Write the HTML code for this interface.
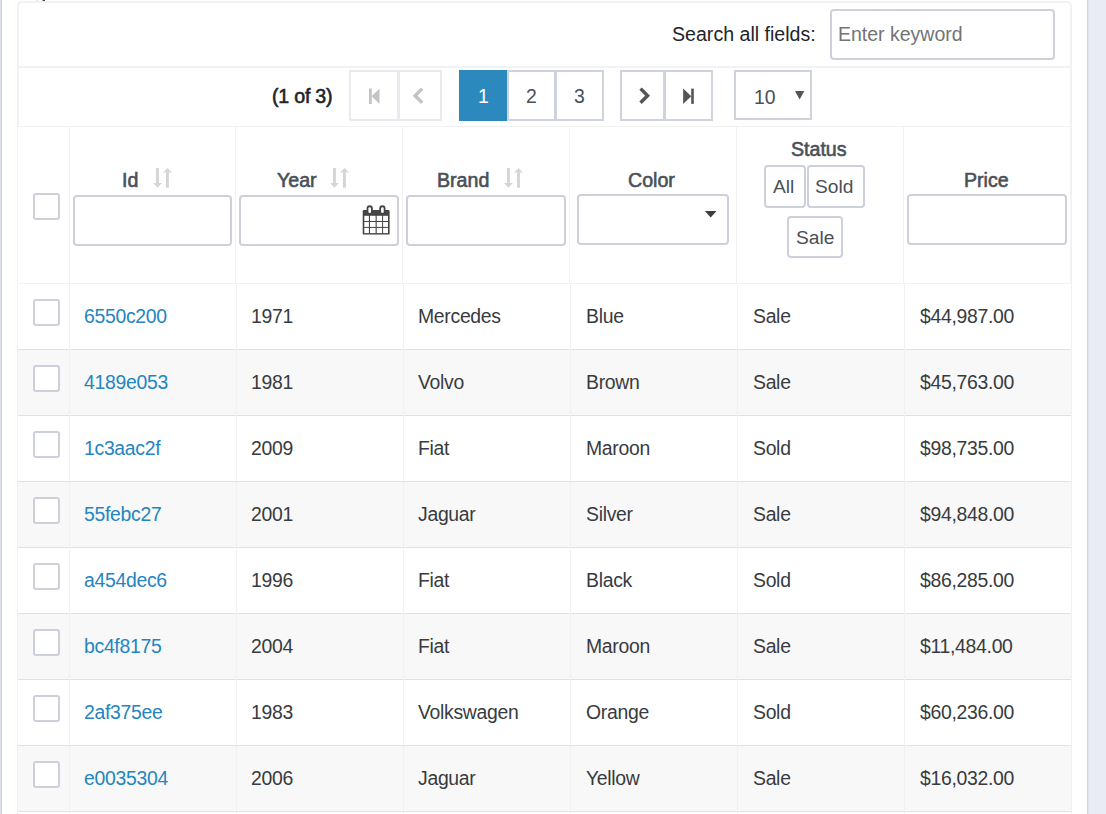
<!DOCTYPE html>
<html><head><meta charset="utf-8">
<style>
html,body{margin:0;padding:0;}
body{width:1106px;height:814px;overflow:hidden;background:#fff;position:relative;font-family:"Liberation Sans",sans-serif;color:#212529;}
.a{position:absolute;box-sizing:border-box;}
.t{position:absolute;white-space:nowrap;line-height:1;}
.hl{position:absolute;height:1px;}
.vl{position:absolute;width:1px;}
.inp{position:absolute;box-sizing:border-box;border:2px solid #cdd0da;border-radius:4px;background:#fff;}
.pbtn{position:absolute;box-sizing:border-box;border:2px solid #cfd3dd;background:#fff;}
.cb{position:absolute;box-sizing:border-box;width:27px;height:27px;border:2px solid #cdd0da;border-radius:3px;background:#fff;}
.cell{font-size:19.4px;letter-spacing:-0.3px;color:#383b3f;}
.lnk{color:#2485c0;}
.hdr{font-size:19.6px;font-weight:normal;color:#495057;-webkit-text-stroke:0.6px #495057;}
</style></head><body>
<!-- left strip -->
<div class="a" style="left:0;top:0;width:1px;height:814px;background:#dee2eb"></div>
<div class="a" style="left:1px;top:0;width:1px;height:814px;background:#ced2d8"></div>
<!-- right strip -->
<div class="a" style="left:1087px;top:0;width:1px;height:814px;background:#d0d3d7"></div>
<div class="a" style="left:1088px;top:0;width:1px;height:814px;background:#e0e4ec"></div><div class="a" style="left:1089px;top:0;width:17px;height:814px;background:#e9ecf5"></div>
<!-- dot at top -->
<div class="a" style="left:42px;top:0;width:1px;height:1px;background:#aaa"></div><div class="a" style="left:43px;top:0;width:2px;height:1px;background:#444"></div><div class="a" style="left:36px;top:0;width:2px;height:1px;background:#e6e6e6"></div>

<!-- panel -->
<div class="a" id="panel" style="left:17px;top:1px;width:1055px;height:126px;border:2px solid #f2f2f2;border-bottom:0;border-radius:5px 5px 0 0;"></div>
<div class="vl" style="left:17px;top:127px;height:157px;background:#f2f2f2"></div>
<div class="a" style="left:1070px;top:127px;width:2px;height:157px;background:#f2f2f2"></div>

<!-- search header -->
<div class="t" style="left:672px;top:25px;font-size:19.6px;color:#212529">Search all fields:</div>
<div class="inp" style="left:830px;top:9px;width:225px;height:51px;"></div>
<div class="t" style="left:838px;top:25px;font-size:19.5px;color:#717477">Enter keyword</div>
<div class="a" style="left:19px;top:66px;width:1051px;height:2px;background:#f2f2f2"></div>

<!-- paginator -->
<div class="t" style="left:272px;top:87px;font-size:19.6px;letter-spacing:-0.22px;color:#212529;-webkit-text-stroke:0.6px #212529">(1 of 3)</div>
<div class="pbtn" style="left:349px;top:70px;width:50px;height:51px;border-color:#e8eaef"></div>
<div class="pbtn" style="left:398px;top:70px;width:44px;height:51px;border-color:#e8eaef"></div>
<svg class="a" style="left:360px;top:80px" width="30" height="30" viewBox="360 80 30 30"><rect x="369" y="88.5" width="2.8" height="15.5" fill="#c4c4c4"/><polygon points="371.6,96.3 379.5,88.5 379.5,104" fill="#c4c4c4"/></svg>
<svg class="a" style="left:405px;top:80px" width="30" height="30" viewBox="405 80 30 30"><polyline points="421,89.8 415.1,95.7 421,101.6" fill="none" stroke="#c4c4c4" stroke-width="3.4" stroke-linecap="square" stroke-linejoin="miter"/></svg>
<div class="a" style="left:459px;top:70px;width:48px;height:51px;background:#2b89bd"></div>
<div class="t" style="left:478px;top:87px;font-size:19.4px;color:#fff">1</div>
<div class="pbtn" style="left:507px;top:70px;width:49px;height:51px;"></div>
<div class="t" style="left:526px;top:87px;font-size:19.4px;color:#495057">2</div>
<div class="pbtn" style="left:555px;top:70px;width:49px;height:51px;"></div>
<div class="t" style="left:574px;top:87px;font-size:19.4px;color:#495057">3</div>
<div class="pbtn" style="left:620px;top:70px;width:45px;height:51px;"></div>
<div class="pbtn" style="left:664px;top:70px;width:49px;height:51px;"></div>
<svg class="a" style="left:628px;top:80px" width="30" height="30" viewBox="628 80 30 30"><polyline points="641.7,89.8 647.6,95.7 641.7,101.6" fill="none" stroke="#555" stroke-width="3.4" stroke-linecap="square" stroke-linejoin="miter"/></svg>
<svg class="a" style="left:673px;top:80px" width="30" height="30" viewBox="673 80 30 30"><polygon points="683.1,88.5 691.3,96.2 683.1,104" fill="#555"/><rect x="691.2" y="88.6" width="2.6" height="15.3" fill="#555"/></svg>
<div class="pbtn" style="left:734px;top:70px;width:78px;height:50px;"></div>
<div class="t" style="left:754px;top:88px;font-size:19.4px;color:#495057">10</div>
<svg class="a" style="left:790px;top:85px" width="20" height="20" viewBox="790 85 20 20"><polygon points="795,91 804.3,91 799.65,99.5" fill="#555"/></svg>
<div class="hl" style="left:17px;top:126px;width:1055px;background:#f2f2f2"></div>

<!-- column borders (header) -->
<div class="vl" style="left:69px;top:127px;height:156px;background:#f1f1f1"></div>
<div class="vl" style="left:235px;top:127px;height:156px;background:#f1f1f1"></div>
<div class="vl" style="left:402px;top:127px;height:156px;background:#f1f1f1"></div>
<div class="vl" style="left:569px;top:127px;height:156px;background:#f1f1f1"></div>
<div class="vl" style="left:736px;top:127px;height:156px;background:#f1f1f1"></div>
<div class="vl" style="left:903px;top:127px;height:156px;background:#f1f1f1"></div>

<!-- header row -->
<div class="cb" style="left:33px;top:193px"></div>
<div class="t hdr" style="left:122px;top:171px">Id</div>
<svg class="a sort" style="left:150px;top:164px" width="26" height="28" viewBox="150 164 26 28"><rect x="156" y="168.1" width="2.9" height="15.2" fill="#d5d5d5"/><polygon points="153.1,183.1 161.9,183.1 157.45,187.8" fill="#d5d5d5"/><polygon points="163.1,172.6 171.8,172.6 167.45,168.1" fill="#d5d5d5"/><rect x="166" y="172.4" width="2.9" height="15.3" fill="#d5d5d5"/></svg>
<div class="inp" style="left:73px;top:195px;width:159px;height:51px"></div>
<div class="t hdr" style="left:277px;top:171px">Year</div>
<svg class="a sort" style="left:327px;top:164px" width="26" height="28" viewBox="150 164 26 28"><rect x="156" y="168.1" width="2.9" height="15.2" fill="#d5d5d5"/><polygon points="153.1,183.1 161.9,183.1 157.45,187.8" fill="#d5d5d5"/><polygon points="163.1,172.6 171.8,172.6 167.45,168.1" fill="#d5d5d5"/><rect x="166" y="172.4" width="2.9" height="15.3" fill="#d5d5d5"/></svg>
<div class="inp" style="left:239px;top:195px;width:160px;height:51px"></div>
<svg class="a" style="left:360px;top:203px" width="32" height="34" viewBox="360 203 32 34">
<rect x="362.7" y="209.9" width="26.9" height="24.7" rx="1.2" fill="#444"/>
<g fill="#fff">
<rect x="364.3" y="215.8" width="4.6" height="5.2"/><rect x="370" y="215.8" width="5.6" height="5.2"/><rect x="376.7" y="215.8" width="5.4" height="5.2"/><rect x="383.1" y="215.8" width="4.9" height="5.2"/>
<rect x="364.3" y="222" width="4.6" height="4.9"/><rect x="370" y="222" width="5.6" height="4.9"/><rect x="376.7" y="222" width="5.4" height="4.9"/><rect x="383.1" y="222" width="4.9" height="4.9"/>
<rect x="364.3" y="227.9" width="4.6" height="5.2"/><rect x="370" y="227.9" width="5.6" height="5.2"/><rect x="376.7" y="227.9" width="5.4" height="5.2"/><rect x="383.1" y="227.9" width="4.9" height="5.2"/>
</g>
<rect x="366.6" y="205.2" width="6.2" height="8.6" rx="3" fill="#444"/><rect x="379.3" y="205.2" width="6.2" height="8.6" rx="3" fill="#444"/>
<rect x="368.4" y="207.3" width="2.6" height="5.7" rx="1.3" fill="#fff"/><rect x="381.1" y="207.3" width="2.6" height="5.7" rx="1.3" fill="#fff"/>
</svg>
<div class="t hdr" style="left:437px;top:171px">Brand</div>
<svg class="a sort" style="left:501px;top:164px" width="26" height="28" viewBox="150 164 26 28"><rect x="156" y="168.1" width="2.9" height="15.2" fill="#d5d5d5"/><polygon points="153.1,183.1 161.9,183.1 157.45,187.8" fill="#d5d5d5"/><polygon points="163.1,172.6 171.8,172.6 167.45,168.1" fill="#d5d5d5"/><rect x="166" y="172.4" width="2.9" height="15.3" fill="#d5d5d5"/></svg>
<div class="inp" style="left:406px;top:195px;width:160px;height:51px"></div>
<div class="t hdr" style="left:628px;top:171px">Color</div>
<div class="inp" style="left:577px;top:194px;width:152px;height:51px"></div>
<svg class="a" style="left:696px;top:204px" width="28" height="20" viewBox="696 204 28 20"><polygon points="704.9,211.1 716.5,211.1 710.7,217.4" fill="#3d3d3d"/></svg>
<div class="t hdr" style="left:791px;top:140px">Status</div>
<div class="inp" style="left:764px;top:165px;width:42px;height:43px"></div>
<div class="t" style="left:773px;top:177px;font-size:19.2px;color:#495057">All</div>
<div class="inp" style="left:807px;top:165px;width:58px;height:43px"></div>
<div class="t" style="left:815px;top:177px;font-size:19.2px;color:#495057">Sold</div>
<div class="inp" style="left:787px;top:216px;width:56px;height:42px"></div>
<div class="t" style="left:796px;top:228px;font-size:19.2px;color:#495057">Sale</div>
<div class="t hdr" style="left:964px;top:171px">Price</div>
<div class="inp" style="left:907px;top:194px;width:160px;height:51px"></div>
<div class="hl" style="left:18px;top:283px;width:1052px;background:#f2f2f2"></div>

<!--ROWS-->
<div class="cb" style="left:33px;top:299px"></div>
<div class="t cell lnk" style="left:84px;top:307px">6550c200</div>
<div class="t cell" style="left:251px;top:307px">1971</div>
<div class="t cell" style="left:418px;top:307px">Mercedes</div>
<div class="t cell" style="left:586px;top:307px">Blue</div>
<div class="t cell" style="left:753px;top:307px">Sale</div>
<div class="t cell" style="left:920px;top:307px">$44,987.00</div>
<div class="a" style="left:18px;top:350px;width:1053px;height:65px;background:#f8f8f8"></div>
<div class="hl" style="left:18px;top:349px;width:1053px;background:#dee2e6"></div>
<div class="cb" style="left:33px;top:365px"></div>
<div class="t cell lnk" style="left:84px;top:373px">4189e053</div>
<div class="t cell" style="left:251px;top:373px">1981</div>
<div class="t cell" style="left:418px;top:373px">Volvo</div>
<div class="t cell" style="left:586px;top:373px">Brown</div>
<div class="t cell" style="left:753px;top:373px">Sale</div>
<div class="t cell" style="left:920px;top:373px">$45,763.00</div>
<div class="hl" style="left:18px;top:415px;width:1053px;background:#dee2e6"></div>
<div class="cb" style="left:33px;top:431px"></div>
<div class="t cell lnk" style="left:84px;top:439px">1c3aac2f</div>
<div class="t cell" style="left:251px;top:439px">2009</div>
<div class="t cell" style="left:418px;top:439px">Fiat</div>
<div class="t cell" style="left:586px;top:439px">Maroon</div>
<div class="t cell" style="left:753px;top:439px">Sold</div>
<div class="t cell" style="left:920px;top:439px">$98,735.00</div>
<div class="a" style="left:18px;top:482px;width:1053px;height:65px;background:#f8f8f8"></div>
<div class="hl" style="left:18px;top:481px;width:1053px;background:#dee2e6"></div>
<div class="cb" style="left:33px;top:497px"></div>
<div class="t cell lnk" style="left:84px;top:505px">55febc27</div>
<div class="t cell" style="left:251px;top:505px">2001</div>
<div class="t cell" style="left:418px;top:505px">Jaguar</div>
<div class="t cell" style="left:586px;top:505px">Silver</div>
<div class="t cell" style="left:753px;top:505px">Sale</div>
<div class="t cell" style="left:920px;top:505px">$94,848.00</div>
<div class="hl" style="left:18px;top:547px;width:1053px;background:#dee2e6"></div>
<div class="cb" style="left:33px;top:563px"></div>
<div class="t cell lnk" style="left:84px;top:571px">a454dec6</div>
<div class="t cell" style="left:251px;top:571px">1996</div>
<div class="t cell" style="left:418px;top:571px">Fiat</div>
<div class="t cell" style="left:586px;top:571px">Black</div>
<div class="t cell" style="left:753px;top:571px">Sold</div>
<div class="t cell" style="left:920px;top:571px">$86,285.00</div>
<div class="a" style="left:18px;top:614px;width:1053px;height:65px;background:#f8f8f8"></div>
<div class="hl" style="left:18px;top:613px;width:1053px;background:#dee2e6"></div>
<div class="cb" style="left:33px;top:629px"></div>
<div class="t cell lnk" style="left:84px;top:637px">bc4f8175</div>
<div class="t cell" style="left:251px;top:637px">2004</div>
<div class="t cell" style="left:418px;top:637px">Fiat</div>
<div class="t cell" style="left:586px;top:637px">Maroon</div>
<div class="t cell" style="left:753px;top:637px">Sale</div>
<div class="t cell" style="left:920px;top:637px">$11,484.00</div>
<div class="hl" style="left:18px;top:679px;width:1053px;background:#dee2e6"></div>
<div class="cb" style="left:33px;top:695px"></div>
<div class="t cell lnk" style="left:84px;top:703px">2af375ee</div>
<div class="t cell" style="left:251px;top:703px">1983</div>
<div class="t cell" style="left:418px;top:703px">Volkswagen</div>
<div class="t cell" style="left:586px;top:703px">Orange</div>
<div class="t cell" style="left:753px;top:703px">Sold</div>
<div class="t cell" style="left:920px;top:703px">$60,236.00</div>
<div class="a" style="left:18px;top:746px;width:1053px;height:65px;background:#f8f8f8"></div>
<div class="hl" style="left:18px;top:745px;width:1053px;background:#dee2e6"></div>
<div class="cb" style="left:33px;top:761px"></div>
<div class="t cell lnk" style="left:84px;top:769px">e0035304</div>
<div class="t cell" style="left:251px;top:769px">2006</div>
<div class="t cell" style="left:418px;top:769px">Jaguar</div>
<div class="t cell" style="left:586px;top:769px">Yellow</div>
<div class="t cell" style="left:753px;top:769px">Sale</div>
<div class="t cell" style="left:920px;top:769px">$16,032.00</div>
<div class="hl" style="left:18px;top:811px;width:1053px;background:#dee2e6"></div>
<div class="vl" style="left:17px;top:284px;height:540px;background:#f1f1f1"></div>
<div class="vl" style="left:69px;top:284px;height:540px;background:#f1f1f1"></div>
<div class="vl" style="left:236px;top:284px;height:540px;background:#f1f1f1"></div>
<div class="vl" style="left:403px;top:284px;height:540px;background:#f1f1f1"></div>
<div class="vl" style="left:570px;top:284px;height:540px;background:#f1f1f1"></div>
<div class="vl" style="left:737px;top:284px;height:540px;background:#f1f1f1"></div>
<div class="vl" style="left:904px;top:284px;height:540px;background:#f1f1f1"></div>
<div class="vl" style="left:1071px;top:284px;height:540px;background:#f1f1f1"></div>
<!--/ROWS-->
</body></html>
